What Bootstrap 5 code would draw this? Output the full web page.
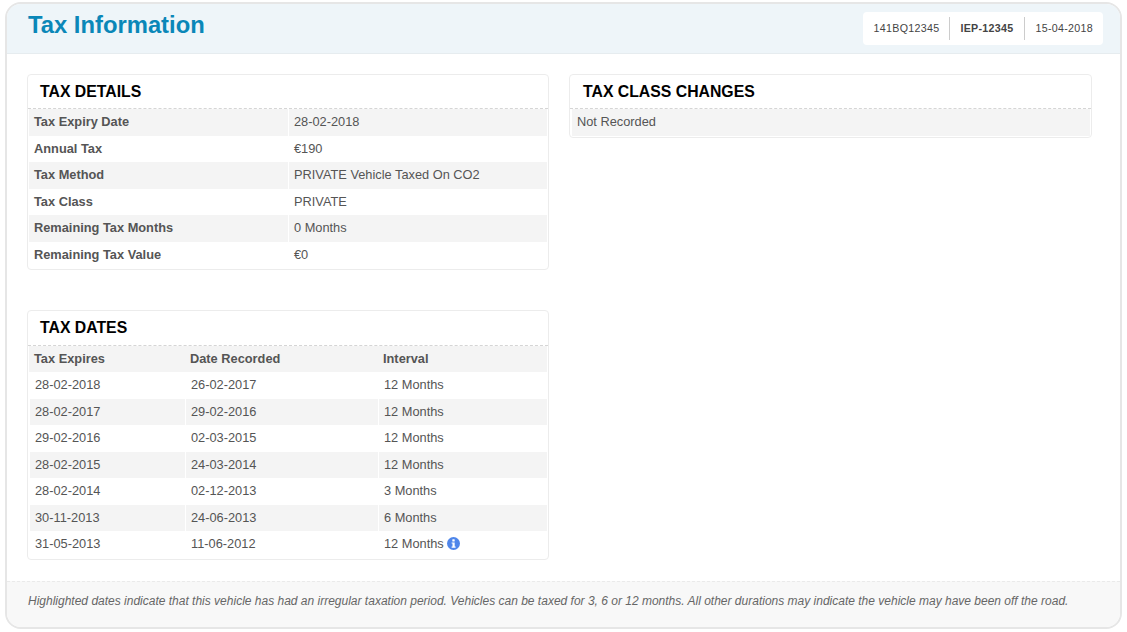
<!DOCTYPE html>
<html lang="en">
<head>
<meta charset="utf-8">
<title>Tax Information</title>
<link rel="stylesheet" href="https://cdn.jsdelivr.net/npm/bootstrap@5.3.0/dist/css/bootstrap.min.css">
<style>
html,body{height:100%;background:#fff;}
body{font-family:"Liberation Sans",Arial,sans-serif;font-size:12.8px;color:#555;padding:2px 5px 2px 5px;overflow:hidden;}
.shell{height:627px;border:2px solid #e6e6e6;border-radius:16px;overflow:hidden;background:#fff;display:flex;flex-direction:column;}
.shell-head{height:50px;background:#eef5f9;border-bottom:1px solid #e6ecef;padding:0 17px 0 21px;flex:none;}
.shell-title{font-size:23.8px;font-weight:700;color:#0a87b8;margin:0;line-height:42px;}
.refbox{margin-top:8px;height:33px;background:#fff;border-radius:4px;padding:5px 0;font-size:10.67px;color:#444;letter-spacing:.3px;}
.refbox span{padding:0 10px;line-height:23px;border-left:1px solid #ccc;height:23px;display:block;}
.refbox span:first-child{border-left:0;padding-left:11px;}
.refbox span:nth-child(2){padding-right:11px;}
.shell-body{flex:1;padding:20px 28px 0 20px;display:grid;grid-template-columns:522px 523px;column-gap:20px;align-content:start;}
.panel{border:1px solid #ececec;border-radius:4px;background:#fff;overflow:hidden;padding-bottom:1px;}
.panel-second{margin-top:40px;}
.panel-second .panel-title{height:34.5px;}
.panel-second .tbl-wrap{padding-bottom:.5px;}
.panel-title{height:34px;border-bottom:1px dashed #d5d5d5;padding:0 12px;font-size:15.8px;font-weight:700;color:#000;line-height:33px;margin:0;}
.side-panel .panel-title{padding-left:13px;}
.tbl-wrap{padding:0 1px;}
.shell table{width:100%;border-collapse:separate;border-spacing:0;table-layout:fixed;}
.shell td,.shell th{padding:0 5px;height:26.5px;line-height:26px;font-size:12.8px;color:#555;white-space:nowrap;background-clip:padding-box;}
.shell th{font-weight:700;}
.shell td{border-left:1px solid #fff;}
.band th,.band td,.headband th{background-color:#f4f4f4;}
.info-dot{width:13px;height:13px;vertical-align:-2px;}
.shell-foot{height:46px;flex:none;background:#f8f8f8;border-top:1px dashed #eaeaea;padding:0 21px;line-height:38px;font-size:12px;font-style:italic;color:#666;margin-top:auto;}
</style>
</head>
<body>
<div class="shell">
  <div class="shell-head d-flex justify-content-between align-items-start">
    <h1 class="shell-title">Tax Information</h1>
    <div class="refbox d-flex">
      <span>141BQ12345</span><span class="fw-bold">IEP-12345</span><span>15-04-2018</span>
    </div>
  </div>
  <div class="shell-body">
    <div>
      <div class="panel">
        <h2 class="panel-title">TAX DETAILS</h2>
        <div class="tbl-wrap">
        <table>
          <colgroup><col style="width:259px"><col></colgroup>
          <tr class="band"><th>Tax Expiry Date</th><td>28-02-2018</td></tr>
          <tr><th>Annual Tax</th><td>€190</td></tr>
          <tr class="band"><th>Tax Method</th><td>PRIVATE Vehicle Taxed On CO2</td></tr>
          <tr><th>Tax Class</th><td>PRIVATE</td></tr>
          <tr class="band"><th>Remaining Tax Months</th><td>0 Months</td></tr>
          <tr><th>Remaining Tax Value</th><td>€0</td></tr>
        </table>
        </div>
      </div>
      <div class="panel panel-second">
        <h2 class="panel-title">TAX DATES</h2>
        <div class="tbl-wrap">
        <table>
          <colgroup><col style="width:156px"><col style="width:193px"><col></colgroup>
          <tr class="headband"><th>Tax Expires</th><th>Date Recorded</th><th>Interval</th></tr>
          <tr><td>28-02-2018</td><td>26-02-2017</td><td>12 Months</td></tr>
          <tr class="band"><td>28-02-2017</td><td>29-02-2016</td><td>12 Months</td></tr>
          <tr><td>29-02-2016</td><td>02-03-2015</td><td>12 Months</td></tr>
          <tr class="band"><td>28-02-2015</td><td>24-03-2014</td><td>12 Months</td></tr>
          <tr><td>28-02-2014</td><td>02-12-2013</td><td>3 Months</td></tr>
          <tr class="band"><td>30-11-2013</td><td>24-06-2013</td><td>6 Months</td></tr>
          <tr><td>31-05-2013</td><td>11-06-2012</td><td>12 Months <svg class="info-dot" viewBox="0 0 13 13" aria-hidden="true"><circle cx="6.5" cy="6.5" r="6.5" fill="#4f86ea"/><rect x="5.3" y="2.2" width="2.4" height="2.2" rx=".5" fill="#fff"/><path d="M4.6 5.4h3.1v4.2h.9v1.2H4.6V9.6h.9V6.6h-.9z" fill="#fff"/></svg></td></tr>
        </table>
        </div>
      </div>
    </div>
    <div>
      <div class="panel side-panel">
        <h2 class="panel-title">TAX CLASS CHANGES</h2>
        <div class="tbl-wrap">
        <table>
          <tr class="band"><td>Not Recorded</td></tr>
        </table>
        </div>
      </div>
    </div>
  </div>
  <div class="shell-foot">Highlighted dates indicate that this vehicle has had an irregular taxation period. Vehicles can be taxed for 3, 6 or 12 months. All other durations may indicate the vehicle may have been off the road.</div>
</div>
<script src="https://cdn.jsdelivr.net/npm/bootstrap@5.3.0/dist/js/bootstrap.bundle.min.js"></script>
</body>
</html>
